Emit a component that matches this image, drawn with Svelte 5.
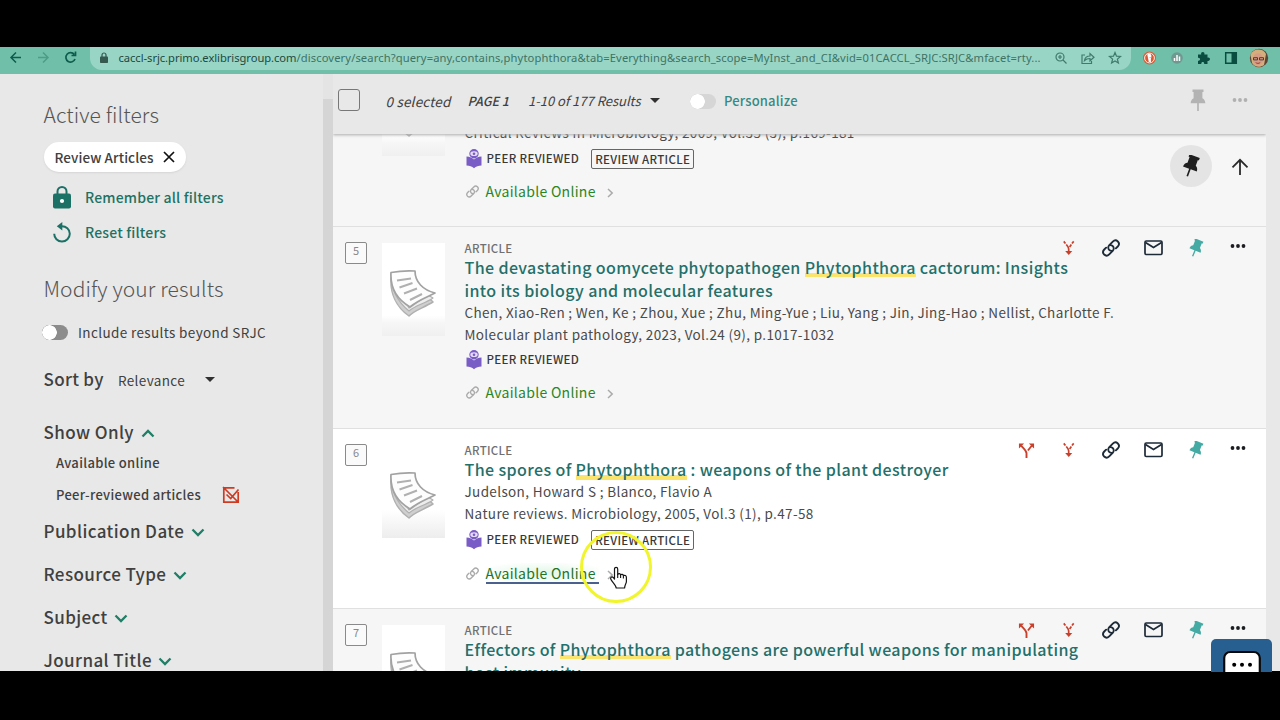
<script>
  const filterGroups = ['Publication Date', 'Resource Type', 'Subject', 'Journal Title'];
  const rows = [
    { id: 4, cut: true, title: [], journal: 'Critical Reviews in Microbiology, 2009, Vol.35 (3), p.169-181', review: true },
    {
      id: 5, actions: ['citing', 'link', 'mail', 'pin'],
      title: [['The devastating oomycete phytopathogen ', 'Phytophthora', ' cactorum: Insights'], ['into its biology and molecular features', '', '']],
      authors: 'Chen, Xiao-Ren ; Wen, Ke ; Zhou, Xue ; Zhu, Ming-Yue ; Liu, Yang ; Jin, Jing-Hao ; Nellist, Charlotte F.',
      journal: 'Molecular plant pathology, 2023, Vol.24 (9), p.1017-1032'
    },
    {
      id: 6, hover: true, review: true, actions: ['cited', 'citing', 'link', 'mail', 'pin'],
      title: [['The spores of ', 'Phytophthora', ' : weapons of the plant destroyer']],
      authors: 'Judelson, Howard S ; Blanco, Flavio A',
      journal: 'Nature reviews. Microbiology, 2005, Vol.3 (1), p.47-58'
    },
    {
      id: 7, last: true, actions: ['cited', 'citing', 'link', 'mail', 'pin'],
      title: [['Effectors of ', 'Phytophthora', ' pathogens are powerful weapons for manipulating'], ['host immunity', '', '']]
    }
  ];
</script>

{#snippet chevron(up)}
  <svg class="chev" width="14" height="9" viewBox="0 0 14 9"><path d={up ? 'M1.5 7.5 7 2l5.500 5.500' : 'M1.500 1.500 7 7l5.500-5.500'} fill="none" stroke="#1f7f66" stroke-width="2.300" /></svg>
{/snippet}

{#snippet pinShape(size, color, angle)}
  <svg width={size} height={size} viewBox="0 0 24 24" fill={color}><g transform="rotate({angle} 12 12)"><path d="M6 .5h12v2.800h-1.200V10c2 1 3.100 2.800 3.200 5.500h-7.100V24h-1.800v-8.500H4c.1-2.700 1.200-4.500 3.200-5.500V3.300H6z" /></g></svg>
{/snippet}

{#snippet linkShape(size, color)}
  <svg width={size} height={size} viewBox="0 0 24 24" fill="none" stroke={color} stroke-width="2.500" stroke-linecap="round"><path d="M13.700 15.800c-2.800.4-5-1.200-5.300-3.800-.2-1.500.4-2.800 1.400-3.800l4.600-4.600c2-2 4.900-2 6.700-.3 1.800 1.800 1.800 4.700-.1 6.700l-2.500 2.500" /><path d="M10.300 8.200c2.800-.4 5 1.200 5.300 3.800.2 1.500-.4 2.800-1.400 3.800l-4.600 4.600c-2 2-4.900 2-6.700.3-1.800-1.800-1.800-4.700.1-6.700l2.500-2.500" /></svg>
{/snippet}

{#snippet paper()}
  <svg width="48" height="50" viewBox="0 0 48 50" fill="none" stroke-linejoin="round">
    <path d="M1 9c-1 15 5 29 18 38 4-5 14-8 24-14l-5-5L20 39z" fill="#cfcfcf" stroke="#b0b0b0" stroke-width="1.500" />
    <path d="M1 5c0 15 7 28 18 37 7-6 15-7 24-13l-5-3-19 13z" fill="#ededed" stroke="#b0b0b0" stroke-width="1.200" />
    <path d="M1 3.500C9 2 16 1.500 25 2c0 11 8 19 20 22-7 4-17 7-25 14C8 31 0 20 1 3.500z" fill="#fdfdfd" stroke="#a2a2a2" stroke-width="1.700" />
    <path d="m7 11.500 14-2M9.500 18.500l13-4.500M14 24.500l13-5M20 31l12-6" stroke="#b0b0b0" stroke-width="2" />
  </svg>
{/snippet}

{#snippet dots(color)}
  <svg width="18" height="6" viewBox="0 0 18 6" fill={color}><circle cx="3.500" cy="3" r="1.900" /><circle cx="9" cy="3" r="1.900" /><circle cx="14.500" cy="3" r="1.900" /></svg>
{/snippet}

<div class="screen">
  <header class="browser">
    <svg class="nav" width="80" height="22" viewBox="0 0 80 22" fill="none" stroke-width="1.500">
      <path d="M21 10.500H11m5-5-5 5 5 5" stroke="#0d5c4d" />
      <path d="M38 10.500h10m-5-5 5 5-5 5" stroke="#4d9d89" />
      <path d="M74.300 7.500a4.700 4.700 0 1 0 .7 4.500M75.500 4.500v4h-4" stroke="#0d5c4d" stroke-width="1.700" />
    </svg>
    <div class="omni">
      <svg width="10" height="12" viewBox="0 0 10 12"><rect x="1" y="4.500" width="8" height="6.500" rx=".8" fill="#35584f" /><path d="M3 5V3a2 2 0 0 1 4 0v2" fill="none" stroke="#35584f" stroke-width="1.200" /></svg>
      <div class="url"><span class="host">caccl-srjc.primo.exlibrisgroup.com</span><span class="path">/discovery/search?query=any,contains,phytophthora&amp;tab=Everything&amp;search_scope=MyInst_and_CI&amp;vid=01CACCL_SRJC:SRJC&amp;mfacet=rty...</span></div>
      <svg class="omni-tools" width="70" height="14" viewBox="0 0 70 14" fill="none" stroke="#3f7a6c" stroke-width="1.200">
        <circle cx="6" cy="6" r="4" /><path d="m9 9 3.500 3.500M4 6h4M6 4v4" />
        <path d="M31 4h-3v8.500h9.500V10M30.500 9.500c.5-3 2.500-4.500 5.500-4.500V2.500l4 3.700-4 3.600V7.500c-2.500 0-4 .5-5.500 2z" />
        <path d="m61 1.500 1.500 3.700 4 .3-3.100 2.600 1 3.900-3.400-2.100-3.400 2.100 1-3.900-3.100-2.600 4-.3z" />
      </svg>
    </div>
    <svg class="ext" width="128" height="20" viewBox="0 0 128 20">
      <circle cx="6.500" cy="10" r="6.500" fill="#da5b36" /><circle cx="6.500" cy="10" r="4.900" fill="none" stroke="#fff" stroke-width=".9" /><path d="M4.300 6.500c1-1.500 3.500-1 4 .8.400 2-.8 2.700-.3 6.700H5.800z" fill="#fff" /><path d="m6.500 9 2.500.5-2.300.8z" fill="#f0b52c" />
      <circle cx="34" cy="10" r="5.800" fill="#6f9990" /><path d="M31.500 13v-3M34 13V7M36.500 13V8.500" stroke="#fff" stroke-width="1.500" />
      <path d="M55 6.500h3.200c-.8-3.200 4-3.200 3.200 0h3.100v3.200c3.300-.8 3.300 4 0 3.200V16h-3.300c.3-2.600-3.200-2.600-2.900 0H55v-3.300c2.800.2 2.800-3.200 0-3z" fill="#0a4d40" />
      <path d="M82.700 4.700h10.600v10.600H82.700z" fill="none" stroke="#0a4d40" stroke-width="1.500" /><path d="M88.500 4.700H93v10.600h-4.500z" fill="#0a4d40" />
      <circle cx="116" cy="10" r="9.200" fill="#5b4638" /><path d="M107.500 7c2-6.500 12.500-7.500 15.500-1l-2 11c-4 3-10 2-12-2z" fill="#d4ae7c" /><ellipse cx="115" cy="11.200" rx="5" ry="6" fill="#d79c84" /><path d="M110.500 9.700h4v2.200h-4zM116.500 9.700h4v2.200h-4z" fill="none" stroke="#343436" stroke-width=".9" /><path d="M112.700 14.600c1.500 1 3 1 4.500 0" stroke="#a33c38" fill="none" />
    </svg>
  </header>

  <div class="page">
    <aside>
      <h2>Active filters</h2>
      <div class="chip">Review Articles <svg width="12" height="12" viewBox="0 0 12 12"><path d="m1 1 10 10M11 1 1 11" stroke="#111" stroke-width="1.700" /></svg></div>
      <div class="act remember">
        <svg width="18" height="23" viewBox="0 0 18 23"><path d="M4.500 9V5.500a4.500 4.500 0 0 1 9 0V9" fill="none" stroke="#1b7166" stroke-width="2" /><rect y="7.500" width="18" height="15" rx="2" fill="#1b7166" /><circle cx="9" cy="15" r="2.100" fill="#fff" /></svg>
        Remember all filters
      </div>
      <div class="act reset">
        <svg width="18" height="21" viewBox="0 0 18 21"><path d="M8.500 4.200C13 4 16.800 7.200 16.800 11.800A7.800 7.800 0 0 1 9 19.500c-4.500 0-7.800-3.500-7.800-7.700" fill="none" stroke="#1b7166" stroke-width="2" /><path d="M9.300 0v8.600L3.800 4.300z" fill="#1b7166" /></svg>
        Reset filters
      </div>
      <h2 class="modify">Modify your results</h2>
      <div class="include"><i class="toggle"></i>Include results beyond SRJC</div>
      <div class="sort"><b>Sort by</b><span>Relevance</span><i class="caret"></i></div>
      <div class="group only">Show Only {@render chevron(true)}</div>
      <div class="option">Available online</div>
      <div class="option peeropt">Peer-reviewed articles
        <svg width="18" height="18" viewBox="0 0 18 18" fill="none" stroke="#cf3a22" stroke-width="1.700"><path d="M12.500 1.800H1.800v14.400h14.400V6M1 1l15.500 15.500M4.500 8.500l4.200 4L16.500 3.500" /></svg>
      </div>
      {#each filterGroups as g}
        <div class="group">{g} {@render chevron(false)}</div>
      {/each}
    </aside>
    <div class="track"><div class="thumb"></div></div>

    <main>
      <div class="toolbar">
        <i class="box"></i>
        <em class="selected">0 selected</em>
        <em class="pageno">PAGE 1</em>
        <em class="range">1-10 of 177 Results</em>
        <i class="caret"></i>
        <i class="toggle pale"></i>
        <span class="personalize">Personalize</span>
        <div class="bulk">{@render pinShape(22, '#b3b3b3', 0)}{@render dots('#b0b0b0')}</div>
      </div>

      {#each rows as r}
        <article class:cut={r.cut} class:hover={r.hover} class:last={r.last}>
          <div class="num">{r.id}</div>
          <div class="thumbnail">{@render paper()}</div>
          <div class="body">
            {#if !r.cut}<div class="kind">ARTICLE</div>{/if}
            {#each r.title as t}
              <div class="title">{t[0]}<mark>{t[1]}</mark>{t[2]}</div>
            {/each}
            {#if r.authors}<div class="meta">{r.authors}</div>{/if}
            {#if r.journal}
              <div class="meta">{r.journal}</div>
              <div class="badges" class:tall={r.review}>
                <svg width="16" height="20" viewBox="0 0 16 20"><circle cx="8" cy="4.700" r="4.700" fill="#7a5cc6" /><ellipse cx="8" cy="4.700" rx="3.700" ry="2.400" fill="#e5dcf7" /><circle cx="8" cy="4.700" r="1.300" fill="#7a5cc6" /><path d="M.5 7.500C4 7.500 6.500 9 8 10.500c1.500-1.500 4-3 7.500-3v9c-3 .2-5.500 1-7.500 2.700-2-1.700-4.500-2.500-7.500-2.700z" fill="#7a5cc6" /></svg>
                <span>PEER REVIEWED</span>
                {#if r.review}<span class="review">REVIEW ARTICLE</span>{/if}
              </div>
              <div class="avail">
                {@render linkShape(13, '#aaa')}
                <span>Available Online</span>
                <svg class="go" width="7" height="10" viewBox="0 0 7 10"><path d="m1 1 4.200 4L1 9" fill="none" stroke="#aaa" stroke-width="1.500" /></svg>
              </div>
            {/if}
          </div>
          {#if r.actions}
            <div class="actions">
              {#each r.actions as a}
                <div class="cell">
                  {#if a === 'cited'}
                    <svg width="17" height="17" viewBox="0 0 18 18" fill="#c8402c"><path d="M9 17v-5C9 9 6.500 7.500 3.500 4M10.500 9l4-5" fill="none" stroke="#c8402c" stroke-width="2" /><path d="M1 1.500h5.500L1 7zM17 1.500h-5.500L17 7z" /></svg>
                  {:else if a === 'citing'}
                    <svg width="17" height="18" viewBox="0 0 18 18" fill="#c8402c"><path d="m4 2 1.800 2.200M6.600 5.300C8 7 9.200 8 9.200 10v3M14.500 2l-1.800 2.200M12 5.300 10.200 8" fill="none" stroke="#c8402c" stroke-width="1.800" /><path d="M5.500 12.200h7.500l-3.700 4.300z" /></svg>
                  {:else if a === 'link'}
                    {@render linkShape(18, '#1d2a38')}
                  {:else if a === 'mail'}
                    <svg width="19" height="16" viewBox="0 0 19 16" fill="none" stroke="#1d2a38" stroke-width="1.700"><rect x="1" y="1" width="17" height="13.500" rx="1.200" /><path d="m1.500 2.500 8 5 8-5" /></svg>
                  {:else}
                    {@render pinShape(18, '#44aaa3', 22)}
                  {/if}
                </div>
              {/each}
              <div class="cell more">{@render dots('#1b1d20')}</div>
            </div>
          {/if}
        </article>
      {/each}
    </main>
  </div>

  <div class="float-pin">{@render pinShape(22, '#1f1f1f', 20)}</div>
  <svg class="float-up" width="18" height="18" viewBox="0 0 18 18" fill="none" stroke="#2a2a2a" stroke-width="1.800"><path d="M9 17V2M1.500 9.300 9 1.800l7.500 7.500" /></svg>
  <div class="chat"><svg width="40" height="26" viewBox="0 0 40 26"><rect x="2.200" y="2" width="35.600" height="32" rx="6" fill="#fff" stroke="#080808" stroke-width="2.200" /><circle cx="12.200" cy="14.700" r="2" /><circle cx="20" cy="14.700" r="2" /><circle cx="28" cy="14.700" r="2" /></svg></div>
  <div class="ring"></div>
  <svg class="cursor" width="19" height="24" viewBox="0 0 19 24"><path d="M5.500 13V3c0-2.300 3.200-2.300 3.200 0v5.300c1-1 2.500-.7 2.900.4 1-.7 2.500-.3 2.800.8 1.400-.6 3 .2 3 1.900v4c0 2-1.800 3.400-1.800 6.600H7.200c0-2.800-3.600-5.500-5.300-8.600-1.100-2 1.100-3.400 2.500-1.700z" fill="#fff" stroke="#151515" stroke-width="1.200" stroke-linejoin="round" /><path d="M8.700 8v4M11.600 8.700V12M14.400 9.500V12.500" stroke="#151515" stroke-width="1.100" /></svg>
</div>

<style>
  :global(body) { background: #000; }
  .screen { position: relative; box-sizing: border-box; width: 1280px; height: 720px; padding-top: 47px; border-bottom: 48px solid #000; overflow: hidden; background: #000; font-family: "Noto Sans CJK SC", sans-serif; color: #404040; white-space: nowrap; }
  svg { display: block; flex: none; }
  i { display: block; flex: none; }

  .browser { display: flex; height: 27px; background: #70bfa9; }
  .nav { margin-right: 10px; }
  .omni { display: flex; align-items: center; box-sizing: border-box; width: 1041px; height: 23px; padding: 0 7px 1px 9px; border-radius: 0 0 12px 12px; background: #99d5c5; }
  .url { display: flex; width: 923px; margin-left: 9.500px; font: 11.2px/20px "Noto Sans", sans-serif; color: #3d7366; }
  .host { color: #1c4a40; letter-spacing: -.05px; }
  .path { letter-spacing: .112px; }
  .omni-tools { margin-left: 13.500px; }
  .ext { margin: 1px 0 0 12px; }

  .page { display: flex; height: 597px; background: #e8e8e8; }
  aside { box-sizing: border-box; width: 323px; height: 597px; padding: 25px 0 0 43.500px; overflow: hidden; }
  h2 { margin: 0; height: 30px; font-size: 21px; line-height: 30px; font-weight: 300; letter-spacing: .09px; color: #555; }
  .chip { display: flex; align-items: center; justify-content: space-between; box-sizing: border-box; width: 142px; height: 30px; margin-top: 13px; padding: 0 10.500px 0 11px; border-radius: 15px; background: #fff; box-shadow: 0 1px 2px #d5d5d5; font-size: 13.5px; line-height: 28px; font-weight: 500; letter-spacing: .09px; }
  .chip { padding-bottom: 1px; }
  .act { display: flex; align-items: center; gap: 14.500px; height: 24px; padding-left: 9px; font-size: 14px; line-height: 24px; font-weight: 500; letter-spacing: .18px; color: #1f7263; }
  .remember { margin-top: 13px; }
  .reset { margin-top: 11px; }
  .modify { margin-top: 29px; }
  .include { display: flex; align-items: center; height: 24px; margin-top: 17px; font-size: 13.5px; letter-spacing: .37px; }
  .toggle { width: 26px; height: 15px; border-radius: 8px; background: radial-gradient(circle at 7.500px 7.500px, #fff 7px, transparent 7.500px), #8c8c8c; }
  .include .toggle { margin: 1px 10px 0 -1.500px; }
  .sort { display: flex; align-items: center; height: 28px; margin-top: 21px; }
  .sort b { width: 74.500px; font-size: 17px; line-height: 28px; font-weight: 500; letter-spacing: .3px; }
  .sort span { width: 86.500px; padding-top: 2px; font-size: 13.5px; line-height: 26px; letter-spacing: .35px; }
  .caret { width: 0; border: 5px solid transparent; border-top-color: #303030; border-bottom-width: 0; }
  .group { display: flex; align-items: center; gap: 6.500px; height: 28px; margin-bottom: 15px; font-size: 17px; line-height: 28px; font-weight: 500; letter-spacing: .4px; }
  .chev { margin-top: 2px; }
  .only { margin: 25px 0 5px; }
  .option { display: flex; height: 24px; margin: 0 0 8px 12.500px; font-size: 13px; line-height: 24px; font-weight: 500; letter-spacing: .31px; }
  .peeropt { margin-bottom: 10px; gap: 21.500px; }
  .peeropt svg { margin-top: 3px; }
  .track { width: 10px; height: 597px; padding-top: 25px; box-sizing: border-box; background: #e4e4e4; }
  .thumb { height: 572px; background: #d5d5d5; }

  main { width: 933px; height: 597px; overflow: hidden; background: #f6f6f6; }
  .toolbar { position: relative; z-index: 1; display: flex; align-items: center; box-sizing: border-box; height: 60px; padding: 0 17px 6px 4.500px; background: #e8e8e8; box-shadow: 0 1px 3px #aaa; font-size: 13.5px; line-height: 24px; }
  .box { box-sizing: border-box; width: 22px; height: 22px; margin-bottom: 2px; border: 1px solid #777; border-radius: 3px; }
  .selected { width: 82px; margin: 0 0 1px 26px; letter-spacing: .2px; }
  .pageno { width: 60.500px; font-size: 12.500px; font-weight: 500; letter-spacing: .05px; }
  .range { width: 122px; font-size: 13px; }
  .toolbar .caret { margin-bottom: 2px; }
  .toolbar .toggle { width: 26px; margin-left: 30px; }
  .pale { background: radial-gradient(circle at 7.500px 7.500px, #fff 7px, transparent 7.500px), #d6d6d6; }
  .personalize { margin-left: 8px; font-size: 13px; font-weight: 500; letter-spacing: .18px; color: #368a83; }
  .bulk { display: flex; align-items: center; gap: 22.500px; margin: 0 0 2px auto; }

  article { display: flex; box-sizing: border-box; height: 202px; padding: 12px 0 0 12px; border-top: 1px solid #e0e0e0; background: #f6f6f6; }
  article.hover { height: 180px; background: #fff; }
  article.cut { height: 92px; border: 0; align-items: flex-end; padding: 0 0 23px 12px; }
  article.last { height: 100px; }
  .num { box-sizing: border-box; width: 22px; height: 22px; margin-top: 3px; border: 1px solid #8a8a8a; border-radius: 2px; background: #fafafa; text-align: center; font-size: 11px; line-height: 15px; color: #888; }
  .thumbnail { box-sizing: border-box; width: 63px; height: 93px; margin: 4px 19.500px 0 15px; padding: 26px 0 0 8px; background: linear-gradient(#fff 78%, #f6f6f6 86%, #f0f0f0); }
  .hover .thumbnail { background: linear-gradient(#fff 70%, #ededed); }
  .cut .num { visibility: hidden; }
  .cut .thumbnail { margin-bottom: 47px; }
  .body { flex: none; width: 520px; }
  .kind { height: 17px; font-size: 11.5px; line-height: 18px; font-weight: 500; letter-spacing: .32px; color: #707070; }
  .title { height: 23px; font-size: 16px; line-height: 23px; font-weight: 500; letter-spacing: .39px; color: #23706a; }
  mark { color: inherit; background: linear-gradient(transparent 18px, #fbe46b 18px, #fbe46b 22.500px, transparent 22.500px); }
  .meta { height: 22px; font-size: 13.5px; line-height: 21px; letter-spacing: .36px; color: #4a4a4a; }
  .badges { display: flex; align-items: center; box-sizing: border-box; height: 26px; padding: 1px 0 0 1px; font-size: 11.5px; line-height: 19px; font-weight: 500; letter-spacing: .33px; color: #383838; }
  .badges svg { margin-right: 5px; }
  .badges.tall { height: 27px; padding-top: 2px; }
  .review { margin-left: 12px; padding: 0 3px; border: 1px solid #666; border-radius: 2px; line-height: 18px; }
  .avail { display: flex; align-items: center; height: 24px; margin-top: 8px; padding-left: 1px; font-size: 14px; line-height: 24px; letter-spacing: .29px; color: #2c861f; }
  .avail span { margin: 0 8px 0 7px; padding-right: 3px; }
  .hover .avail { margin-top: 9px; }
  .hover .avail span { height: 19px; line-height: 20px; border-bottom: 2px solid #4a6190; background: radial-gradient(ellipse, #e2f7e6, #fff 85%); color: #267326; }
  .go { margin-top: 3px; }
  .actions { display: flex; flex: none; align-items: center; height: 18px; margin-left: auto; padding-right: 8.500px; }
  .cell { display: flex; justify-content: center; align-items: center; width: 42.500px; height: 20px; }
  .more { width: 40px; padding-bottom: 4px; height: 16px; }

  .float-pin { position: absolute; left: 1170px; top: 145px; width: 42px; height: 42px; display: grid; place-items: center; border-radius: 50%; background: #e4e4e4; }
  .float-up { position: absolute; left: 1231px; top: 158px; }
  .chat { position: absolute; left: 1211px; top: 639px; display: flex; justify-content: center; box-sizing: border-box; width: 61px; height: 33px; padding-top: 11px; overflow: hidden; border-radius: 5px 5px 0 0; background: #275f91; }
  .ring { position: absolute; left: 580px; top: 531px; box-sizing: border-box; width: 72px; height: 72px; border: 3px solid #f1f52b; border-radius: 50%; }
  .cursor { position: absolute; left: 608.500px; top: 566px; }
</style>
